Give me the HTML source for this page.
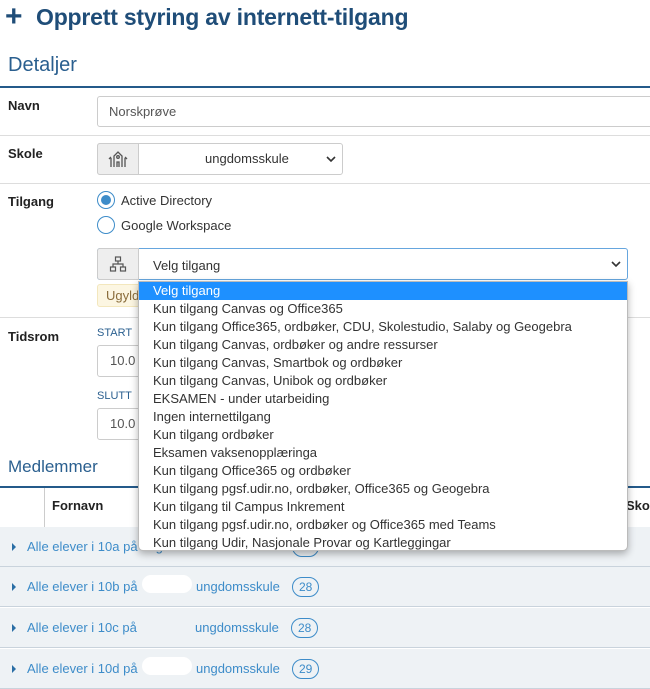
<!DOCTYPE html>
<html><head><meta charset="utf-8"><style>
*{box-sizing:border-box;margin:0;padding:0}
body{width:650px;height:676px;overflow:hidden;background:#fff;font-family:"Liberation Sans",sans-serif;color:#333;position:relative}
.a{position:absolute;white-space:nowrap}
.lbl{font-weight:bold;font-size:13px;color:#222}
.hr{position:absolute;left:0;width:650px;height:1px;background:#ddd}
.inp{position:absolute;border:1px solid #ccc;border-radius:3px;background:#fff}
.add{position:absolute;background:#eee;border:1px solid #ccc;border-radius:3px 0 0 3px}
.dd div{height:18px;line-height:18px;padding-left:14px;font-size:13px;color:#333}
.row{position:absolute;left:0;width:650px;height:40px;background:#eef2f5;border-bottom:1px solid #c9d3dc}
.row span.t{position:absolute;left:27px;top:12px;font-size:13px;color:#3d8cc9}
.row .tri{position:absolute;left:12px;top:16px;width:0;height:0;border-left:4px solid #2b6ea5;border-top:4px solid transparent;border-bottom:4px solid transparent}
.badge{position:absolute;top:10px;height:20px;border:1px solid #3d8cc9;border-radius:10px;font-size:12px;line-height:18px;color:#3d8cc9;padding:0 6px}
</style></head><body>
<div class="a" style="left:5px;top:0px;font-size:30px;font-weight:bold;color:#1f4d78">+</div>
<div class="a" style="left:36px;top:4px;font-size:23px;font-weight:bold;color:#1f4d78;letter-spacing:-0.2px">Opprett styring av internett-tilgang</div>
<div class="a" style="left:8px;top:54px;font-size:20px;color:#2a5f8f">Detaljer</div>
<div class="hr" style="top:86px;height:2px;background:#245a8a"></div>

<div class="a lbl" style="left:8px;top:98px">Navn</div>
<div class="inp" style="left:97px;top:96px;width:570px;height:31px"></div>
<div class="a" style="left:109px;top:104px;font-size:13px;color:#555">Norskprøve</div>
<div class="hr" style="top:135px"></div>

<div class="a lbl" style="left:8px;top:146px">Skole</div>
<div class="inp" style="left:97px;top:143px;width:246px;height:32px"></div>
<div class="add" style="left:97px;top:143px;width:42px;height:32px"></div>
<svg class="a" style="left:108px;top:150px" width="20" height="18" viewBox="0 0 20 18" fill="none" stroke="#555" stroke-width="1.3"><path d="M3 17V8M6 17V6l4-4 4 4v11M17 17V8M1 9l2-2M19 9l-2-2"/><circle cx="10" cy="7" r="1.3"/><path d="M9 17v-5h2v5"/></svg>
<div class="a" style="left:205px;top:151px;font-size:13px;color:#333">ungdomsskule</div>
<svg class="a" style="left:326px;top:155px" width="10" height="8"><path d="M1 2l4 4 4-4" stroke="#333" stroke-width="1.6" fill="none"/></svg>
<div class="hr" style="top:183px"></div>

<div class="a lbl" style="left:8px;top:194px">Tilgang</div>
<div class="a" style="left:97px;top:191px;width:18px;height:18px;border:1px solid #3d8cc9;border-radius:50%"></div>
<div class="a" style="left:101px;top:195px;width:10px;height:10px;background:#3d8cc9;border-radius:50%"></div>
<div class="a" style="left:121px;top:193px;font-size:13px;color:#333">Active Directory</div>
<div class="a" style="left:97px;top:216px;width:18px;height:18px;border:1px solid #3d8cc9;border-radius:50%"></div>
<div class="a" style="left:121px;top:218px;font-size:13px;color:#333">Google Workspace</div>

<div class="inp" style="left:97px;top:248px;width:531px;height:32px;border-color:#66a6de"></div>
<div class="add" style="left:97px;top:248px;width:42px;height:32px"></div>
<svg class="a" style="left:109px;top:256px" width="18" height="16" viewBox="0 0 18 16" fill="none" stroke="#555" stroke-width="1.2"><rect x="6.5" y="1" width="5" height="4"/><rect x="1.5" y="11" width="5" height="4"/><rect x="11.5" y="11" width="5" height="4"/><path d="M9 5v3M4 11V8h10v3"/></svg>
<div class="a" style="left:153px;top:258px;font-size:13px;color:#333">Velg tilgang</div>
<svg class="a" style="left:611px;top:260px" width="10" height="8"><path d="M1 2l4 4 4-4" stroke="#333" stroke-width="1.6" fill="none"/></svg>
<div class="a" style="left:97px;top:284px;width:60px;height:23px;background:#fcf6e2;border:1px solid #f3e7bd;border-radius:3px;font-size:13px;color:#8a6d3b;padding:3px 0 0 8px;overflow:hidden">Ugyldig</div>
<div class="hr" style="top:317px"></div>

<div class="a lbl" style="left:8px;top:329px">Tidsrom</div>
<div class="a" style="left:97px;top:327px;font-size:11px;color:#2a5f8f">START</div>
<div class="inp" style="left:97px;top:345px;width:80px;height:32px"></div>
<div class="a" style="left:110px;top:353px;font-size:13px;color:#555">10.0</div>
<div class="a" style="left:97px;top:390px;font-size:11px;color:#2a5f8f">SLUTT</div>
<div class="inp" style="left:97px;top:408px;width:80px;height:32px"></div>
<div class="a" style="left:110px;top:416px;font-size:13px;color:#555">10.0</div>

<div class="a" style="left:8px;top:457px;font-size:17px;color:#2a5f8f">Medlemmer</div>
<div class="hr" style="top:486px;height:2px;background:#245a8a"></div>
<div class="a" style="left:44px;top:488px;width:1px;height:39px;background:#ccc"></div>
<div class="a lbl" style="left:52px;top:498px">Fornavn</div>
<div class="a lbl" style="left:626px;top:498px">Skole</div>

<div class="row" style="top:527px"><i class="tri"></i><span class="t">Alle elever i 10a på ungdomsskule</span><span class="badge" style="left:292px">28</span></div>
<div class="row" style="top:567px"><i class="tri"></i><span class="t">Alle elever i 10b på</span><span class="t" style="left:196px">ungdomsskule</span><span class="badge" style="left:292px">28</span></div>
<div class="row" style="top:608px"><i class="tri"></i><span class="t">Alle elever i 10c på</span><span class="t" style="left:195px">ungdomsskule</span><span class="badge" style="left:291px">28</span></div>
<div class="row" style="top:649px"><i class="tri"></i><span class="t">Alle elever i 10d på</span><span class="t" style="left:196px">ungdomsskule</span><span class="badge" style="left:292px">29</span></div>
<div class="a" style="left:142px;top:575px;width:50px;height:18px;background:#fff;border-radius:9px"></div>
<div class="a" style="left:142px;top:657px;width:50px;height:18px;background:#fff;border-radius:9px"></div>

<div class="a dd" style="left:138px;top:281px;width:490px;height:270px;background:#fff;border:1px solid #bbb;border-radius:0 0 5px 5px;box-shadow:0 3px 8px rgba(0,0,0,.3)">
<div style="background:#1e90ff;color:#fff">Velg tilgang</div>
<div>Kun tilgang Canvas og Office365</div>
<div>Kun tilgang Office365, ordbøker, CDU, Skolestudio, Salaby og Geogebra</div>
<div>Kun tilgang Canvas, ordbøker og andre ressurser</div>
<div>Kun tilgang Canvas, Smartbok og ordbøker</div>
<div>Kun tilgang Canvas, Unibok og ordbøker</div>
<div>EKSAMEN - under utarbeiding</div>
<div>Ingen internettilgang</div>
<div>Kun tilgang ordbøker</div>
<div>Eksamen vaksenopplæringa</div>
<div>Kun tilgang Office365 og ordbøker</div>
<div>Kun tilgang pgsf.udir.no, ordbøker, Office365 og Geogebra</div>
<div>Kun tilgang til Campus Inkrement</div>
<div>Kun tilgang pgsf.udir.no, ordbøker og Office365 med Teams</div>
<div>Kun tilgang Udir, Nasjonale Provar og Kartleggingar</div>
</div>
</body></html>
